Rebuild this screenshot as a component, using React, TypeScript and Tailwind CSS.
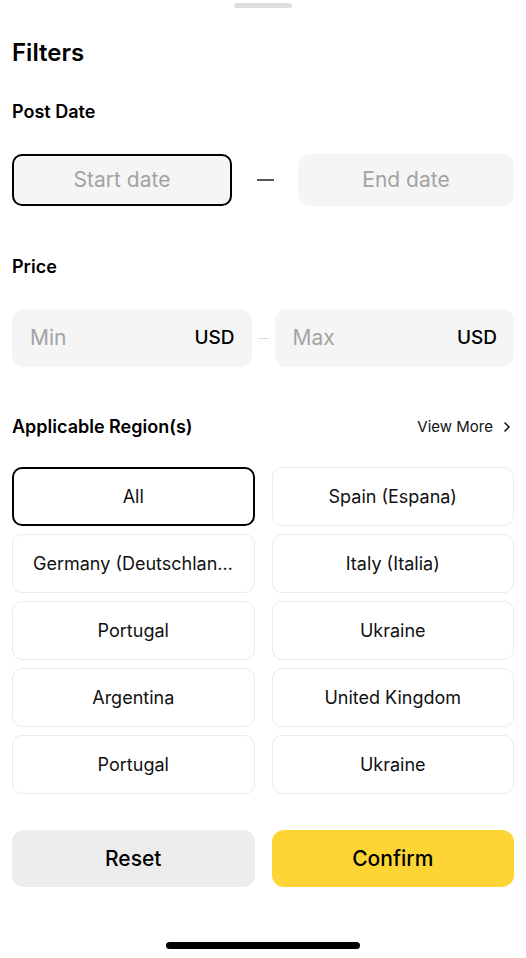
import * as React from "react";

const regions = [
  "All",
  "Spain (Espana)",
  "Germany (Deutschland)",
  "Italy (Italia)",
  "Portugal",
  "Ukraine",
  "Argentina",
  "United Kingdom",
  "Portugal",
  "Ukraine",
];

function SectionTitle({ children, className = "" }: { children: React.ReactNode; className?: string }) {
  return <h2 className={"text-[18px] font-semibold leading-6 text-black " + className}>{children}</h2>;
}

function PriceInput({ placeholder }: { placeholder: string }) {
  return (
    <div className="flex h-[58px] flex-1 items-center justify-between rounded-[12px] bg-[#f5f5f5] pl-[18px] pr-[17px]">
      <span className="text-[21px] text-[#a3a3a3]">{placeholder}</span>
      <span className="text-[19px] font-medium text-black">USD</span>
    </div>
  );
}

export default function App() {
  const [selected, setSelected] = React.useState(0);

  return (
    <div
      className="min-h-[958px] bg-white px-3 text-black"
      style={{ fontFamily: "Inter, 'Open Sans', sans-serif" }}
    >
      <div className="mx-auto mt-[3px] h-[5px] w-[58px] rounded-full bg-[#dedede]" />

      <h1 className="mt-[29px] text-[24px] font-semibold leading-8">Filters</h1>

      <SectionTitle className="mt-[31px]">Post Date</SectionTitle>
      <div className="mt-[30px] flex items-center">
        <div className="flex h-[52px] flex-1 items-center justify-center rounded-[10px] border-2 border-black bg-[#f5f5f5] text-[21px] text-[#a3a3a3]">
          Start date
        </div>
        <div className="flex w-[66px] justify-center">
          <div className="h-[1.5px] w-[17px] bg-[#555]" />
        </div>
        <div className="flex h-[52px] flex-1 items-center justify-center rounded-[10px] bg-[#f5f5f5] text-[21px] text-[#a3a3a3]">
          End date
        </div>
      </div>

      <SectionTitle className="mt-[49px]">Price</SectionTitle>
      <div className="mt-[30px] flex items-center">
        <PriceInput placeholder="Min" />
        <div className="flex w-[23px] justify-center">
          <div className="h-px w-[11px] bg-[#dcdcdc]" />
        </div>
        <PriceInput placeholder="Max" />
      </div>

      <div className="mt-[48px] flex items-center justify-between">
        <SectionTitle>Applicable Region(s)</SectionTitle>
        <button type="button" className="mr-[3px] flex items-center gap-[10px] text-[15px] text-[#111]">
          View More
          <svg width="8" height="12" viewBox="0 0 8 12" fill="none">
            <path d="M2 2l4 4-4 4" stroke="#111" strokeWidth="1.6" strokeLinecap="round" strokeLinejoin="round" />
          </svg>
        </button>
      </div>

      <div className="mt-[28px] grid grid-cols-2 gap-x-[17px] gap-y-[8px]">
        {regions.map((r, i) => (
          <button
            key={i}
            type="button"
            onClick={() => setSelected(i)}
            className={
              "flex h-[59px] items-center justify-center rounded-[10px] bg-white px-5 text-[18px] text-[#111] " +
              (selected === i ? "border-2 border-black" : "border border-[#ebebeb]")
            }
          >
            <span className="truncate">{r}</span>
          </button>
        ))}
      </div>

      <div className="mt-[36px] flex gap-[17px]">
        <button type="button" className="h-[57px] flex-1 rounded-[12px] bg-[#ececec] text-[21px] font-medium text-black">
          Reset
        </button>
        <button type="button" className="h-[57px] flex-1 rounded-[12px] bg-[#fcd535] text-[21px] font-medium text-black">
          Confirm
        </button>
      </div>

      <div className="mx-auto mt-[55px] h-[7px] w-[194px] rounded-full bg-black" />
    </div>
  );
}
